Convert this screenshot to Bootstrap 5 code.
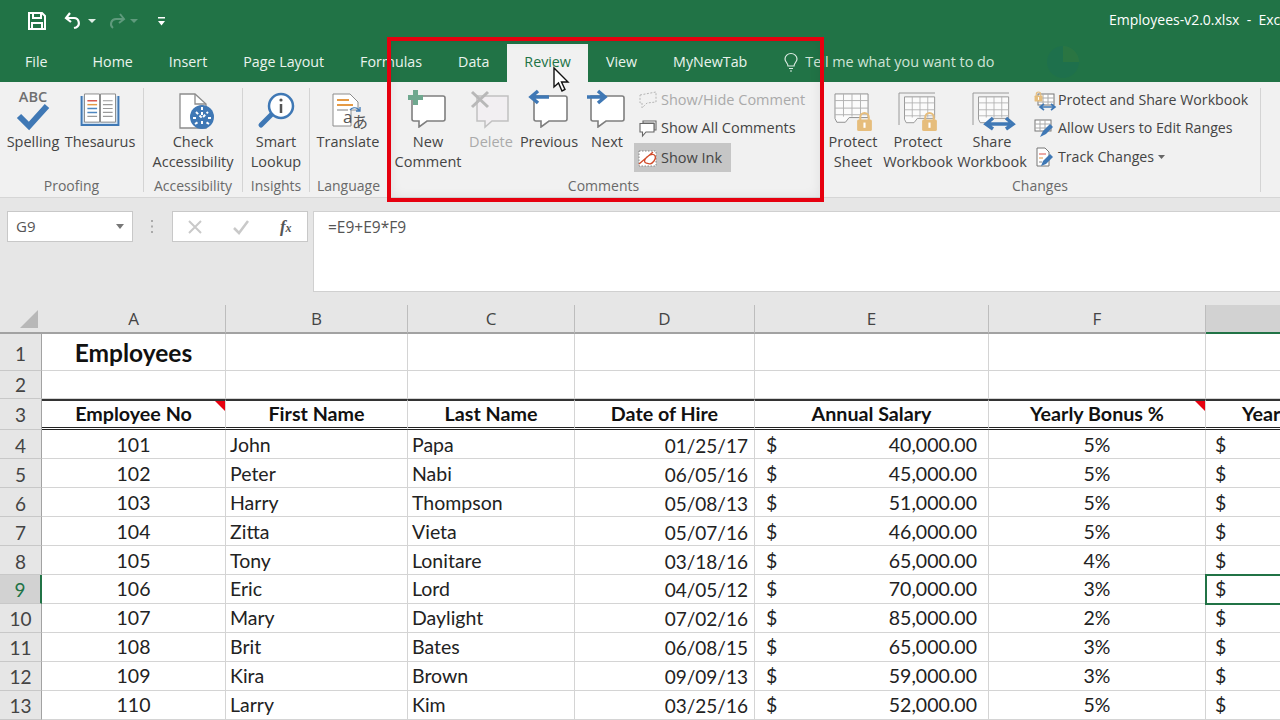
<!doctype html>
<html lang="en"><head><meta charset="utf-8"><title>Employees-v2.0.xlsx - Excel</title>
<link rel="stylesheet" href="https://cdn.jsdelivr.net/npm/bootstrap@5.3.0/dist/css/bootstrap.min.css">
<style>
html,body{width:1280px;height:720px;overflow:hidden;background:#fff}
body{font-family:"Open Sans","Noto Sans",sans-serif;font-size:14.5px;color:#444}
svg{display:block;overflow:visible}
.app{width:1280px;height:720px;overflow:hidden}
.titlebar{height:42px;background:#217346;color:#fff}
.qat{width:1109px;padding-left:27px}
.mu{margin-left:17px}.mc1{margin-left:6px}.mr{margin-left:12px}.mc2{margin-left:4px}.mq{margin-left:20px}
.title{font-size:14px;white-space:nowrap;margin-bottom:4px}
.tabs{height:40px;background:#217346;color:#eaf3ee;font-size:14.250px}
.tab{padding:0 18px;line-height:40px;white-space:nowrap}
.tab.file{padding:0 27px 0 25px}
.tab.active{background:#f1f1f1;color:#217346;padding:0 17px;margin-top:2px;line-height:36px}
.tell{color:#cfe3d7;padding-left:19px;gap:7px;line-height:40px;white-space:nowrap;font-size:14.400px}
.wm{margin:2px 0 0 50px;opacity:.12}
.ribbon{height:116px;background:#f1f1f1;border-bottom:1px solid #d6d6d6}
.grp{padding-top:4px;height:115px;flex:none}
.sep::after{content:"";display:block;width:1px;height:104px;background:#d4d4d4;margin-top:2px}
.g1{width:144px}.g2{width:99px}.g3{width:67px}.g4{width:77px}.g5{width:433px}.g6{width:441px}
.gbody{flex:1 1 auto;min-height:0}
.glabel{height:22px;line-height:22px;text-align:center;font-size:14px;color:#6a6a6a;white-space:nowrap}
.rb{flex:none;text-align:center;line-height:20px;color:#444}
.rb .ic{height:46px;display:flex;justify-content:center;align-items:flex-end;padding-bottom:1px}
.off{color:#aaa!important}
.w58{width:58px}.w62{width:62px}.w72{width:72px}.w78{width:76px}.w54{width:54px}.w76{width:76px}
.ps2x{padding-left:2px}.ps5x{padding-left:5px}.ps4x{padding-left:4px}
.up5{margin-bottom:5px}.up3{margin-bottom:3px}.up2{margin-bottom:2px}
.sb{height:28px;line-height:28px;white-space:nowrap;width:max-content}
.sb .si{width:27px;flex:none;display:flex;justify-content:center}
.sb.on{background:#c6c6c6;padding-right:9px;height:29px;line-height:29px;margin-top:1px}
.chg .si{width:28px}
.chg .sb{font-size:14.200px}
.chg .sb:last-child{margin-top:1px}
.fbar{height:107px;background:#e6e6e6;padding:13px 0 13px 7px}
.namebox{width:126px;height:31px;background:#fff;border:1px solid #c8c8c8;padding:0 8px;line-height:29px;color:#555;font-size:15px}
.dots{width:39px;height:31px}
.fxbox{width:136px;height:31px;background:#fff;border:1px solid #c8c8c8;margin-right:5px}
.fx{font-family:"Liberation Serif",serif;font-style:italic;font-weight:700;font-size:17px;color:#555}
.fx small{font-size:12px}
.finput{flex:1 1 auto;height:81px;background:#fff;border:1px solid #d0d0d0;border-right:0;padding:6px 14px;line-height:18px;color:#555;font-size:15.500px}
.sheetwrap{height:415px;overflow:hidden}
.sheet{table-layout:fixed;width:1408px;margin:0;border-collapse:separate;border-spacing:0;font-family:Lato,"Open Sans",sans-serif;font-size:19.500px;color:#222}
.sheet th,.sheet td{padding:0 4px;border:0;border-right:1px solid #d4d4d4;border-bottom:1px solid #d4d4d4;background:#fff;line-height:1;vertical-align:middle;white-space:nowrap;box-shadow:none;overflow:hidden}
.c0{width:42px}.c1{width:184px}.c2{width:182px}.c3{width:167px}.c4{width:180px}.c5{width:234px}.c6{width:217px}.c7{width:202px}
.sheet thead th{height:29px;background:#e6e6e6;color:#444;font-weight:400;text-align:center;border-right-color:#bdbdbd;border-bottom:2px solid #a2a2a2;font-family:"Open Sans",sans-serif;font-size:17px}
.sheet thead th.cornr{padding:0;border-right:0}
.sheet thead th.sel{background:#d2d2d2;border-bottom-color:#217346;border-right:0}
.sheet tbody th{background:#e6e6e6;color:#444;font-weight:400;text-align:center;border-right:1px solid #a2a2a2;border-bottom-color:#c8c8c8;padding:0;font-size:19px}
.sheet tbody th.sel{background:#d2d2d2;color:#217346;border-right:2px solid #217346}
.r{height:29px}.r1{height:37px}.r2{height:28px}
.r3{height:31px}
.r1 th,.r1 td{padding-top:3px!important}
.sheet .ra th,.sheet .ra td{padding-top:2px!important}
.r3 td{font-weight:700;text-align:center;border-top:2px solid #333;border-bottom:3px double #222;position:relative;font-size:19.700px;color:#111}
.r1 td.ttl{font-weight:700;font-size:24.500px;text-align:center;color:#111}
.cn{text-align:center}.dt{text-align:right;padding-right:6px!important;font-size:19px}
.ac{padding:0 11px!important}
.gc{padding-left:9px!important}
.gsel{outline:2px solid #217346;outline-offset:-1px}
.note{position:absolute;right:0;top:0;width:0;height:0;border-top:10px solid #e8000f;border-left:10px solid transparent}
.redbox{position:absolute;left:387px;top:37px;width:437px;height:165px;border:4px solid #e6000f;box-shadow:inset 0 0 12px rgba(0,0,0,.08);pointer-events:none}
.cursor{position:absolute;left:553px;top:67px}
</style></head><body>
<svg width="0" height="0" class="position-absolute"><defs>
<symbol id="bub" viewBox="0 0 36 34"><path d="M2 2H33Q35 2 35 4V25Q35 27 33 27H17L9 33V27H4Q2 27 2 25Z" fill="#fff" stroke="#7f7f7f" stroke-width="1.600"/></symbol>
<symbol id="grid" viewBox="0 0 38 36"><path d="M1 1H36V26H16L12 31H3L1 27Z" fill="#fbfbfb" stroke="#8c8c8c" stroke-width="1"/><path d="M1 8H36M1 16H36M1 23H36M10 1V25M19 1V25M28 1V25" stroke="#b0b0b0" stroke-width="1" fill="none"/></symbol>
<symbol id="lock" viewBox="0 0 16 18"><path d="M4 8V5a4 4 0 0 1 8 0V8" fill="none" stroke="#e6bd7c" stroke-width="2"/><rect x="1" y="7" width="14" height="11" rx="1.500" fill="#e6bd7c"/><rect x="7" y="10" width="2" height="5" fill="#fff"/></symbol>
</defs></svg>
<div class="app position-relative d-flex flex-column">
<header class="titlebar d-flex align-items-center">
 <div class="qat d-flex align-items-center flex-shrink-0">
  <svg width="20" height="20" viewBox="0 0 20 20" fill="none" stroke="#fff" stroke-width="2"><path d="M2 2H15L18 5V18H2Z"/><path d="M6 2V7H14V2M5 18V12H15V18"/></svg>
  <svg class="mu" width="18" height="18" viewBox="0 0 18 18" fill="none" stroke="#fff" stroke-width="2.200"><path d="M6 1L2 6L7 10"/><path d="M2.500 6H10a5 5 0 0 1 2 9.500L10 16"/></svg>
  <svg class="mc1" width="8" height="4" viewBox="0 0 8 4"><path d="M0 0H8L4 4Z" fill="#dfeee6"/></svg>
  <svg class="mr" width="18" height="16" viewBox="0 0 18 16" fill="none" stroke="#5f9a7c" stroke-width="2"><path d="M12 1L16 6L11 10"/><path d="M16 6H8a5 5 0 0 0-3 9"/></svg>
  <svg class="mc2" width="8" height="4" viewBox="0 0 8 4"><path d="M0 0H8L4 4Z" fill="#5f9a7c"/></svg>
  <svg class="mq" width="7" height="9" viewBox="0 0 7 9"><path d="M0 0H7V1.500H0ZM0 4H7L3.500 8.500Z" fill="#fff"/></svg>
 </div>
 <div class="title">Employees-v2.0.xlsx&nbsp; - &nbsp;Excel</div>
</header>
<nav class="tabs d-flex">
 <div class="tab file">File</div><div class="tab">Home</div><div class="tab">Insert</div><div class="tab">Page Layout</div><div class="tab">Formulas</div><div class="tab">Data</div><div class="tab active">Review</div><div class="tab">View</div><div class="tab">MyNewTab</div>
 <div class="tell d-flex align-items-center"><svg width="14" height="19" viewBox="0 0 14 19" fill="none" stroke="#dcebe3" stroke-width="1.200"><path d="M4 13C4 10 1 9 1 6a6 5.500 0 0 1 12 0C13 9 10 10 10 13ZM5 15.500H9M6 18H8"/></svg><span>Tell me what you want to do</span></div>
 <svg class="wm" width="36" height="36" viewBox="0 0 36 36"><circle cx="18" cy="18" r="16" fill="#0a5f7a"/><path d="M18 2A16 16 0 0 1 34 18H18Z" fill="#6f8a2a"/></svg>
</nav>
<section class="ribbon d-flex">
 <div class="grp g1 sep d-flex">
  <div class="flex-grow-1 d-flex flex-column">
   <div class="gbody d-flex ps2x">
    <div class="rb w62"><div class="ic"><svg width="34" height="42" viewBox="0 0 34 42"><text x="17" y="13" text-anchor="middle" font-family="Open Sans" font-size="14.500" fill="#6f6f6f" font-weight="600">ABC</text><path d="M3 27L13 37L31 17" fill="none" stroke="#3f78b5" stroke-width="6"/></svg></div>Spelling</div>
    <div class="rb w72"><div class="ic"><svg class="up5" width="40" height="33" viewBox="0 0 40 34"><path d="M1 3V33H39V3" fill="#cfe0f0" stroke="#3f78b5" stroke-width="2"/><path d="M4 1H19.500V30H4ZM20.500 1H36V30H20.500Z" fill="#fff" stroke="#8a8a8a"/><path d="M7 8H17" stroke="#d9534a" stroke-width="1.500"/><path d="M7 12H17" stroke="#e59a45" stroke-width="1.500"/><path d="M7 16H17M7 20H17" stroke="#4d86c0" stroke-width="1.500"/><path d="M7 24H17M23 8H33M23 12H33M23 16H33M23 20H33M23 24H33" stroke="#9a9a9a" stroke-width="1.200"/></svg></div>Thesaurus</div>
   </div>
   <div class="glabel">Proofing</div>
  </div>
 </div>
 <div class="grp g2 sep d-flex">
  <div class="flex-grow-1 d-flex flex-column">
   <div class="gbody d-flex"><div class="rb flex-grow-1"><div class="ic"><svg width="38" height="38" viewBox="0 0 38 38"><path d="M6 1H21L32 11V35H6Z" fill="#fff" stroke="#8c8c8c" stroke-width="1.300"/><path d="M21 1V11H32" fill="none" stroke="#8c8c8c" stroke-width="1.300"/><circle cx="28" cy="24" r="12" fill="#3f78b5"/><path d="M28 14V22M22 19L28 25L34 19M19 25H22M34 25H37M21 31L24 29M35 31L32 29M28 28V33" stroke="#fff" stroke-width="2" fill="none" stroke-dasharray="3 2"/></svg></div>Check<br>Accessibility</div></div>
   <div class="glabel">Accessibility</div>
  </div>
 </div>
 <div class="grp g3 sep d-flex">
  <div class="flex-grow-1 d-flex flex-column">
   <div class="gbody d-flex"><div class="rb flex-grow-1"><div class="ic"><svg class="up3" width="36" height="36" viewBox="0 0 36 36"><path d="M14 22L3 33" stroke="#3f78b5" stroke-width="5" stroke-linecap="round"/><circle cx="23" cy="14" r="12" fill="#fff" stroke="#3f78b5" stroke-width="2.500"/><path d="M23 12V21" stroke="#555" stroke-width="2.500"/><circle cx="23" cy="8" r="1.600" fill="#555"/></svg></div>Smart<br>Lookup</div></div>
   <div class="glabel">Insights</div>
  </div>
 </div>
 <div class="grp g4 d-flex flex-column">
   <div class="gbody d-flex"><div class="rb w78"><div class="ic"><svg class="up2" width="36" height="36" viewBox="0 0 36 36"><path d="M3 1H20L28 9V17H21V33H3Z" fill="#fff" stroke="#8c8c8c"/><path d="M7 7H19M7 12H23" stroke="#e59a45" stroke-width="1.800"/><path d="M7 17H18" stroke="#a8a8a8" stroke-width="1.500"/><path d="M20 17a6 6 0 0 1 8-1l2 2M30 14V18H26" fill="none" stroke="#3f78b5" stroke-width="1.300"/><text x="13" y="30" font-family="Open Sans" font-size="17" fill="#555">a</text><text x="22" y="35" font-family="Noto Sans CJK JP" font-size="16" fill="#555">あ</text></svg></div>Translate</div></div>
   <div class="glabel">Language</div>
 </div>
 <div class="grp g5 d-flex flex-column">
  <div class="gbody d-flex ps5x">
   <div class="rb w72"><div class="ic"><svg width="40" height="40" viewBox="0 0 40 40"><use href="#bub" x="2" y="3" width="36" height="34"/><path d="M0 6.500H15M7.500 -1V14" stroke="#6fa88f" stroke-width="5"/></svg></div>New<br>Comment</div>
   <div class="rb w54"><div class="ic"><svg width="40" height="40" viewBox="0 0 40 40" opacity=".55"><path d="M6 5H37V30H21L14 36V30H6Z" fill="#f4eef4" stroke="#9a9a9a" stroke-width="1.500"/><path d="M1 1L17 16M17 1L1 16" stroke="#8a8a8a" stroke-width="3"/></svg></div><span class="off">Delete</span></div>
   <div class="rb w62"><div class="ic"><svg width="40" height="40" viewBox="0 0 40 40"><use href="#bub" x="3" y="3" width="36" height="34"/><path d="M20 6H3M9 0L2 6L9 12" fill="none" stroke="#3f78b5" stroke-width="3.500"/></svg></div>Previous</div>
   <div class="rb w54"><div class="ic"><svg width="40" height="40" viewBox="0 0 40 40"><use href="#bub" x="2" y="3" width="36" height="34"/><path d="M0 6H17M11 0L18 6L11 12" fill="none" stroke="#3f78b5" stroke-width="3.500"/></svg></div>Next</div>
   <div>
    <div class="sb d-flex off"><div class="si align-items-center"><svg width="18" height="18" viewBox="0 0 18 18" fill="none" stroke="#b5b5b5" stroke-dasharray="2 1.500"><path d="M1 4L17 1V11L8 12L3 17V12L1 12Z"/></svg></div>Show/Hide Comment</div>
    <div class="sb d-flex"><div class="si align-items-center"><svg width="18" height="17" viewBox="0 0 18 17" fill="#fff" stroke="#666" stroke-width="1.100"><path d="M4 1H17V10H15V3H4Z"/><path d="M1 3.500H15V12H7L3.500 16V12H1Z"/></svg></div>Show All Comments</div>
    <div class="sb on d-flex"><div class="si align-items-center"><svg width="20" height="18" viewBox="0 0 20 18" fill="none"><path d="M1 2H18V17H1Z" fill="#fff" stroke="#888" stroke-dasharray="1.500 1.500"/><path d="M1 15L15 3M8 14c-3-1-1-6 4-8s7 2 4 6-5 3-8 2Z" stroke="#d14b2a" stroke-width="1.300"/></svg></div>Show Ink</div>
   </div>
  </div>
  <div class="glabel">Comments</div>
 </div>
 <div class="grp g6 sep d-flex">
  <div class="flex-grow-1 d-flex flex-column">
  <div class="gbody d-flex ps4x">
   <div class="rb w58"><div class="ic"><svg width="39" height="38" viewBox="0 0 39 38"><use href="#grid" x="0" y="0" width="36" height="34"/><use href="#lock" x="22" y="19" width="17" height="19"/></svg></div>Protect<br>Sheet</div>
   <div class="rb w72"><div class="ic"><svg width="41" height="38" viewBox="0 0 41 38"><path d="M1 0V32M1 0H37" stroke="#9a9a9a" fill="none"/><use href="#grid" x="4" y="3" width="36" height="31"/><use href="#lock" x="23" y="19" width="17" height="19"/></svg></div>Protect<br>Workbook</div>
   <div class="rb w76"><div class="ic"><svg width="41" height="38" viewBox="0 0 41 38"><path d="M1 0V32M1 0H37" stroke="#9a9a9a" fill="none"/><use href="#grid" x="4" y="3" width="36" height="31"/><path d="M16 31H38M21 25L14 31L21 36M34 25L41 31L34 36" fill="none" stroke="#3f78b5" stroke-width="3.500"/></svg></div>Share<br>Workbook</div>
   <div class="chg">
    <div class="sb d-flex"><div class="si align-items-center"><svg width="21" height="19" viewBox="0 0 21 19"><rect x="4" y="3" width="16" height="11" fill="#fff" stroke="#777"/><path d="M4 7H20M4 11H20M9 3V14M14 3V14" stroke="#aaa"/><use href="#lock" x="0" y="0" width="9" height="11"/><path d="M7 16H20M10 13L6 16L10 19M17 13L21 16L17 19" fill="none" stroke="#3f78b5" stroke-width="1.600"/></svg></div>Protect and Share Workbook</div>
    <div class="sb d-flex"><div class="si align-items-center"><svg width="20" height="19" viewBox="0 0 20 19"><rect x="1" y="1" width="16" height="11" fill="#fff" stroke="#777"/><path d="M1 5H17M1 9H17M6 1V12M11 1V12" stroke="#aaa"/><path d="M6 18L9 12L16 5L19 8L12 15Z" fill="#3f78b5"/></svg></div>Allow Users to Edit Ranges</div>
    <div class="sb d-flex"><div class="si align-items-center"><svg width="18" height="20" viewBox="0 0 18 20"><path d="M2 1H10L14 5V19H2Z" fill="#fff" stroke="#777"/><path d="M4 7H11" stroke="#d9534a"/><path d="M4 11H8" stroke="#e59a45"/><path d="M4 15H7" stroke="#888"/><path d="M6 19L8 14L15 7L18 10L11 17Z" fill="#3f78b5"/></svg></div>Track Changes<svg class="ms-1 align-self-center" width="7" height="4" viewBox="0 0 7 4"><path d="M0 0H7L3.500 4Z" fill="#666"/></svg></div>
   </div>
  </div>
  <div class="glabel">Changes</div>
  </div>
 </div>
</section>
<section class="fbar d-flex align-items-start">
 <div class="namebox d-flex justify-content-between align-items-center"><span>G9</span><svg width="8" height="5" viewBox="0 0 8 5"><path d="M0 0H8L4 5Z" fill="#777"/></svg></div>
 <div class="dots d-flex justify-content-center align-items-center"><svg width="3" height="14" viewBox="0 0 3 14" fill="#aaa"><rect width="2" height="2"/><rect y="5.500" width="2" height="2"/><rect y="11" width="2" height="2"/></svg></div>
 <div class="fxbox d-flex align-items-center justify-content-around">
  <svg width="14" height="14" viewBox="0 0 14 14" stroke="#c9c9c9" stroke-width="2"><path d="M1 1L13 13M13 1L1 13"/></svg>
  <svg width="16" height="14" viewBox="0 0 16 14" fill="none" stroke="#c9c9c9" stroke-width="2.500"><path d="M1 8L6 13L15 1"/></svg>
  <span class="fx">f<small>x</small></span>
 </div>
 <div class="finput">=E9+E9*F9</div>
</section>
<section class="sheetwrap">
<table class="table sheet">
<colgroup><col class="c0"><col class="c1"><col class="c2"><col class="c3"><col class="c4"><col class="c5"><col class="c6"><col class="c7"></colgroup>
<thead><tr><th class="cornr"><svg class="ms-auto me-1" width="18" height="18" viewBox="0 0 18 18"><path d="M18 0V18H0Z" fill="#b8b8b8"/></svg></th><th>A</th><th>B</th><th>C</th><th>D</th><th>E</th><th>F</th><th class="sel"></th></tr></thead>
<tbody>
<tr class="r1"><th>1</th><td class="ttl">Employees</td><td></td><td></td><td></td><td></td><td></td><td></td></tr>
<tr class="r2"><th>2</th><td></td><td></td><td></td><td></td><td></td><td></td><td></td></tr>
<tr class="r3"><th>3</th><td>Employee No<i class="note"></i></td><td>First Name</td><td>Last Name</td><td>Date of Hire</td><td>Annual Salary</td><td>Yearly Bonus %<i class="note"></i></td><td>Yearly Bonus $</td></tr>
<tr class="r ra"><th>4</th><td class="cn">101</td><td>John</td><td>Papa</td><td class="dt">01/25/17</td><td class="ac"><div class="d-flex justify-content-between"><span>$</span><span>40,000.00</span></div></td><td class="cn">5%</td><td class="ac gc">$</td></tr>
<tr class="r ra"><th>5</th><td class="cn">102</td><td>Peter</td><td>Nabi</td><td class="dt">06/05/16</td><td class="ac"><div class="d-flex justify-content-between"><span>$</span><span>45,000.00</span></div></td><td class="cn">5%</td><td class="ac gc">$</td></tr>
<tr class="r ra"><th>6</th><td class="cn">103</td><td>Harry</td><td>Thompson</td><td class="dt">05/08/13</td><td class="ac"><div class="d-flex justify-content-between"><span>$</span><span>51,000.00</span></div></td><td class="cn">5%</td><td class="ac gc">$</td></tr>
<tr class="r ra"><th>7</th><td class="cn">104</td><td>Zitta</td><td>Vieta</td><td class="dt">05/07/16</td><td class="ac"><div class="d-flex justify-content-between"><span>$</span><span>46,000.00</span></div></td><td class="cn">5%</td><td class="ac gc">$</td></tr>
<tr class="r ra"><th>8</th><td class="cn">105</td><td>Tony</td><td>Lonitare</td><td class="dt">03/18/16</td><td class="ac"><div class="d-flex justify-content-between"><span>$</span><span>65,000.00</span></div></td><td class="cn">4%</td><td class="ac gc">$</td></tr>
<tr class="r"><th class="sel">9</th><td class="cn">106</td><td>Eric</td><td>Lord</td><td class="dt">04/05/12</td><td class="ac"><div class="d-flex justify-content-between"><span>$</span><span>70,000.00</span></div></td><td class="cn">3%</td><td class="ac gc gsel">$</td></tr>
<tr class="r"><th>10</th><td class="cn">107</td><td>Mary</td><td>Daylight</td><td class="dt">07/02/16</td><td class="ac"><div class="d-flex justify-content-between"><span>$</span><span>85,000.00</span></div></td><td class="cn">2%</td><td class="ac gc">$</td></tr>
<tr class="r"><th>11</th><td class="cn">108</td><td>Brit</td><td>Bates</td><td class="dt">06/08/15</td><td class="ac"><div class="d-flex justify-content-between"><span>$</span><span>65,000.00</span></div></td><td class="cn">3%</td><td class="ac gc">$</td></tr>
<tr class="r"><th>12</th><td class="cn">109</td><td>Kira</td><td>Brown</td><td class="dt">09/09/13</td><td class="ac"><div class="d-flex justify-content-between"><span>$</span><span>59,000.00</span></div></td><td class="cn">3%</td><td class="ac gc">$</td></tr>
<tr class="r"><th>13</th><td class="cn">110</td><td>Larry</td><td>Kim</td><td class="dt">03/25/16</td><td class="ac"><div class="d-flex justify-content-between"><span>$</span><span>52,000.00</span></div></td><td class="cn">5%</td><td class="ac gc">$</td></tr>
</tbody></table>
</section>
<div class="redbox"></div>
<svg class="cursor" width="18" height="26" viewBox="0 0 18 26"><path d="M1 1V20L5.500 16L9 24L12 22.500L8.500 15H15Z" fill="#fff" stroke="#111" stroke-width="1.400"/></svg>
</div>
<script src="https://cdn.jsdelivr.net/npm/bootstrap@5.3.0/dist/js/bootstrap.bundle.min.js"></script>
</body></html>
